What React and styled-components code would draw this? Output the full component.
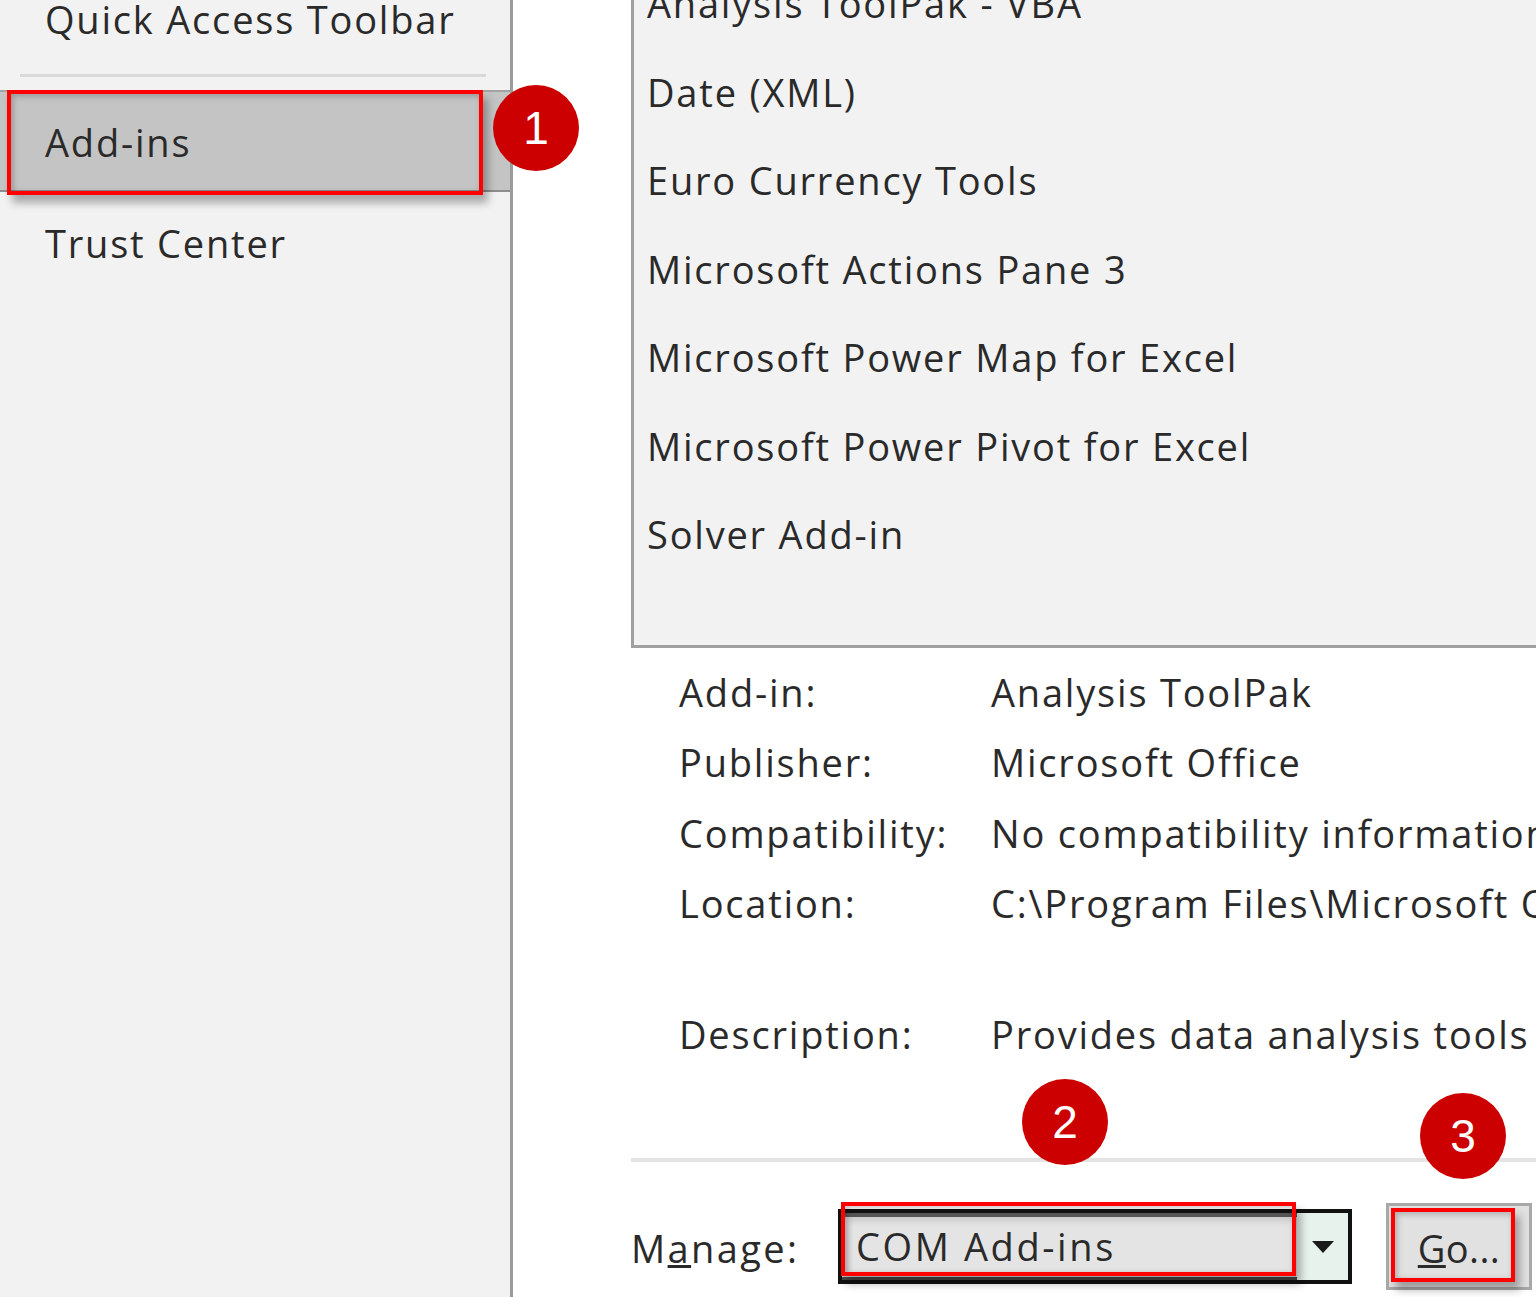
import React from "react";
import styled, { createGlobalStyle } from "styled-components";

const GlobalStyle = createGlobalStyle`
  html, body {
    margin: 0;
    padding: 0;
    width: 1536px;
    height: 1297px;
    overflow: hidden;
    background: #ffffff;
  }
  body {
    font-family: "Open Sans", "Noto Sans", sans-serif;
    color: #2a2a2a;
    letter-spacing: 1.8px;
    line-height: 1.1;
  }
  * { box-sizing: border-box; }
`;

const Page = styled.div`
  display: flex;
  width: 1536px;
  height: 1297px;
  overflow: hidden;
  background: #ffffff;
`;

const Sidebar = styled.nav`
  width: 513px;
  flex-shrink: 0;
  background: #f2f2f2;
  border-right: 3px solid #9a9a9a;
  display: flex;
  flex-direction: column;
`;

const NavItem = styled.div`
  position: relative;
  height: ${(p) => p.$h}px;
  display: flex;
  align-items: center;
  padding-left: 45px;
  padding-top: ${(p) => p.$pt || 0}px;
  font-size: 38px;
  white-space: nowrap;
  ${(p) =>
    p.$selected &&
    `
    background: #c4c4c4;
    border-top: 2px solid #a3a3a3;
    border-bottom: 2px solid #8e8e8e;
  `}
`;

const NavSeparator = styled.div`
  height: 3px;
  background: #d9d9d9;
  margin: 34px 24px 13px 20px;
`;

const Main = styled.main`
  flex: 1;
  min-width: 0;
  overflow: hidden;
  padding-left: 118px;
  display: flex;
  flex-direction: column;
`;

const ListBox = styled.div`
  width: 1100px;
  flex-shrink: 0;
  margin-top: -40px;
  background: #f2f2f2;
  border-left: 3px solid #a0a0a0;
  border-bottom: 3px solid #a0a0a0;
  padding-bottom: 65px;
`;

const ListItem = styled.div`
  height: 88.5px;
  display: flex;
  align-items: center;
  padding-left: 13px;
  font-size: 38px;
  white-space: nowrap;
`;

const Details = styled.div`
  display: grid;
  grid-template-columns: 312px 1000px;
  margin-top: 10px;
  padding-left: 48px;
  font-size: 38px;
  white-space: nowrap;
`;

const DetailCell = styled.div`
  height: 70.5px;
  display: flex;
  align-items: center;
`;

const DetailGap = styled.div`
  grid-column: 1 / -1;
  height: 60px;
`;

const Rule = styled.div`
  width: 1000px;
  flex-shrink: 0;
  height: 4px;
  background: #e3e3e3;
  margin-top: 88px;
`;

const ManageRow = styled.div`
  display: flex;
  align-items: center;
  margin-top: 41px;
  height: 87px;
  flex-shrink: 0;
`;

const ManageLabel = styled.div`
  width: 207px;
  flex-shrink: 0;
  font-size: 38px;
  letter-spacing: 2.4px;
  white-space: nowrap;
  padding-top: 4px;
`;

const Dropdown = styled.div`
  position: relative;
  width: 514px;
  height: 75px;
  flex-shrink: 0;
  border: 4px solid #111111;
  display: flex;
`;

const DropText = styled.div`
  flex: 1;
  background: #e4e4e4;
  border-top: 4px solid #555555;
  border-bottom: 3px solid #4a4a4a;
  box-shadow: inset 6px 4px 6px rgba(0, 0, 0, 0.12);
  display: flex;
  align-items: center;
  padding-left: 14px;
  font-size: 38px;
  letter-spacing: 2.6px;
  white-space: nowrap;
`;

const DropArrow = styled.div`
  width: 51px;
  background: #e8f2ed;
  display: flex;
  align-items: center;
  justify-content: center;
`;

const GoButton = styled.div`
  position: relative;
  margin-left: 34px;
  width: 146px;
  height: 87px;
  flex-shrink: 0;
  border: 3px solid #a8a8a8;
  background: #e1e1e1;
  display: flex;
  align-items: center;
  justify-content: center;
  font-size: 38px;
  letter-spacing: 0.4px;
  padding-top: 4px;
`;

const Highlight = styled.div`
  position: absolute;
  left: ${(p) => p.$l}px;
  top: ${(p) => p.$t}px;
  width: ${(p) => p.$w}px;
  height: ${(p) => p.$h}px;
  border: 4px solid #ff0000;
  box-shadow: 5px 8px 8px rgba(0, 0, 0, 0.3), inset 2px 2px 6px rgba(0, 0, 0, 0.25);
  pointer-events: none;
`;

const Badge = styled.div`
  position: absolute;
  left: ${(p) => p.$l}px;
  top: ${(p) => p.$t}px;
  width: 86px;
  height: 86px;
  border-radius: 50%;
  background: #cc0000;
  color: #ffffff;
  font-family: "Liberation Sans", Arial, sans-serif;
  font-size: 46px;
  letter-spacing: 0;
  display: flex;
  align-items: center;
  justify-content: center;
  z-index: 2;
`;

const items = [
  "Analysis ToolPak - VBA",
  "Date (XML)",
  "Euro Currency Tools",
  "Microsoft Actions Pane 3",
  "Microsoft Power Map for Excel",
  "Microsoft Power Pivot for Excel",
  "Solver Add-in",
];

const details = [
  ["Add-in:", "Analysis ToolPak"],
  ["Publisher:", "Microsoft Office"],
  ["Compatibility:", "No compatibility information available"],
  ["Location:", "C:\\Program Files\\Microsoft Office\\root\\Office16\\Library\\Analysis\\ANALYS32.XLL"],
];

export default function App() {
  return (
    <>
      <GlobalStyle />
      <Page>
        <Sidebar>
          <NavItem $h={40}>Quick Access Toolbar</NavItem>
          <NavSeparator />
          <NavItem $h={102} $pt={4} $selected>
            Add-ins
            <Highlight $l={7} $t={-2} $w={476} $h={105} />
            <Badge $l={493} $t={-7}>1</Badge>
          </NavItem>
          <NavItem $h={100} $pt={4}>Trust Center</NavItem>
        </Sidebar>
        <Main>
          <ListBox>
            {items.map((t) => (
              <ListItem key={t}>{t}</ListItem>
            ))}
          </ListBox>
          <Details>
            {details.map(([k, v]) => (
              <React.Fragment key={k}>
                <DetailCell>{k}</DetailCell>
                <DetailCell>{v}</DetailCell>
              </React.Fragment>
            ))}
            <DetailGap />
            <DetailCell>Description:</DetailCell>
            <DetailCell>Provides data analysis tools for statistical and engineering analysis</DetailCell>
          </Details>
          <Rule />
          <ManageRow>
            <ManageLabel>
              M<u>a</u>nage:
            </ManageLabel>
            <Dropdown>
              <DropText>COM Add-ins</DropText>
              <DropArrow>
                <svg width="24" height="14" viewBox="0 0 24 14">
                  <path d="M1 1 L23 1 L12 13 Z" fill="#1a1a1a" />
                </svg>
              </DropArrow>
              <Highlight $l={-1} $t={-11} $w={455} $h={74} />
              <Badge $l={180} $t={-134}>2</Badge>
            </Dropdown>
            <GoButton>
              <span>
                <u>G</u>o...
              </span>
              <Highlight $l={2} $t={2} $w={124} $h={74} />
              <Badge $l={31} $t={-113}>3</Badge>
            </GoButton>
          </ManageRow>
        </Main>
      </Page>
    </>
  );
}
